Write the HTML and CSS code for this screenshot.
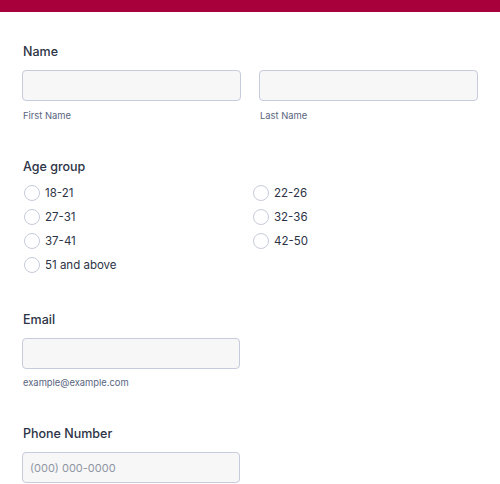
FILE: index.html
```html
<!DOCTYPE html>
<html lang="en">
<head>
<meta charset="utf-8">
<title>Form</title>
<link rel="stylesheet" href="styles.css">
</head>
<body>
<div class="bar"></div>
<form class="form">
  <div class="field field-name">
    <div class="label">Name</div>
    <div class="name-row">
      <div class="sub-field">
        <input class="input" type="text">
        <div class="sublabel">First Name</div>
      </div>
      <div class="sub-field">
        <input class="input" type="text">
        <div class="sublabel">Last Name</div>
      </div>
    </div>
  </div>
  <div class="field field-age">
    <div class="label">Age group</div>
    <div class="radio-grid">
      <label class="radio"><span class="circle"></span>18-21</label>
      <label class="radio"><span class="circle"></span>22-26</label>
      <label class="radio"><span class="circle"></span>27-31</label>
      <label class="radio"><span class="circle"></span>32-36</label>
      <label class="radio"><span class="circle"></span>37-41</label>
      <label class="radio"><span class="circle"></span>42-50</label>
      <label class="radio"><span class="circle"></span>51 and above</label>
    </div>
  </div>
  <div class="field field-email">
    <div class="label">Email</div>
    <input class="input input-half" type="text">
    <div class="sublabel">example@example.com</div>
  </div>
  <div class="field field-phone">
    <div class="label">Phone Number</div>
    <input class="input input-half" type="text" placeholder="(000) 000-0000">
  </div>
</form>
</body>
</html>
```
FILE: styles.css
```css
html, body {
  margin: 0;
  padding: 0;
  background: #ffffff;
}
body {
  font-family: Inter, "Noto Sans", sans-serif;
  color: #2c3345;
  overflow: hidden;
}
.bar {
  height: 12px;
  background: #a8003b;
}
.form {
  padding: 30px 22px 0 22px;
  display: flex;
  flex-direction: column;
}
.label {
  font-size: 12.5px;
  font-weight: 500;
  line-height: 20px;
  padding-left: 1px;
  color: #2c3345;
}
.name-row {
  display: grid;
  grid-template-columns: 1fr 1fr;
  column-gap: 18px;
  margin-top: 8px;
}
.sub-field {
  display: flex;
  flex-direction: column;
}
.input {
  box-sizing: border-box;
  height: 31px;
  width: 100%;
  margin: 0;
  border: 1px solid #c7cbdb;
  border-radius: 4px;
  background: #f7f7f8;
  font-family: Inter, "Noto Sans", sans-serif;
  font-size: 11px;
  color: #2c3345;
  padding: 0 7px;
  outline: none;
  display: block;
}
.input::placeholder {
  color: #8f96a3;
}
.input-half {
  width: 218px;
  margin-top: 8px;
}
.sublabel {
  font-size: 9.4px;
  line-height: 16px;
  margin-top: 7px;
  padding-left: 1px;
  color: #57647e;
}
.field-age {
  margin-top: 33px;
}
.radio-grid {
  display: grid;
  grid-template-columns: 229px 229px;
  margin-top: 4px;
  padding-left: 2px;
}
.radio {
  display: flex;
  align-items: center;
  gap: 5px;
  height: 24px;
  font-size: 11.5px;
  color: #2c3345;
}
.circle {
  box-sizing: border-box;
  width: 16px;
  height: 16px;
  border: 1px solid #c7cbdb;
  border-radius: 50%;
  background: #fff;
  flex: none;
}
.field-email {
  margin-top: 33px;
}
.field-email .sublabel {
  margin-top: 6px;
}
.field-phone {
  margin-top: 33px;
}
```
